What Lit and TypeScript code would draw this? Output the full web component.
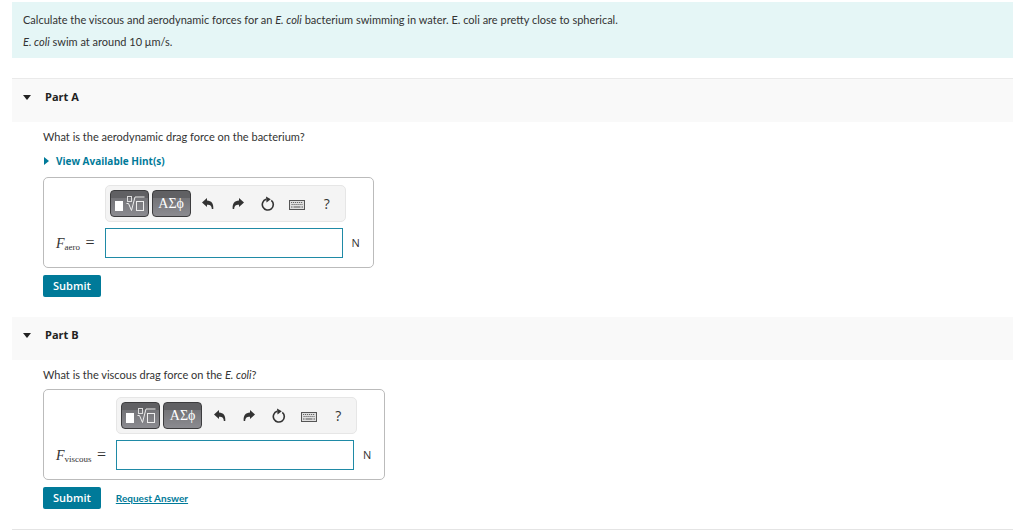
import { LitElement, html, css, svg } from "lit";
import { customElement, property } from "lit/decorators.js";

const icons = {
  template: svg`<svg width="33" height="21" viewBox="0 0 33 21" fill="none" stroke="#eee">
    <rect x="2" y="8" width="8" height="10" fill="#fff" stroke="none"/>
    <rect x="14.500" y="3.500" width="4" height="5" stroke="#ddd"/>
    <path d="M13.500 10.500h2l3 7 3.500-13.500h9.500"/>
    <rect x="23.500" y="8.500" width="7" height="9"/>
  </svg>`,
  undo: svg`<svg width="12" height="12" viewBox="0 0 12 12" fill="#333">
    <path d="M0 4.500 5 0v2.500c4.500 .2 6.800 3 6.300 8.500h-1.500c0-2.800-1.300-4.300-4.800-4.300V9z"/>
  </svg>`,
  redo: svg`<svg width="12" height="12" viewBox="0 0 12 12" fill="#333">
    <path d="M12 4.500 7 0v2.500C2.500 2.700.200 5.500.700 11h1.500c0-2.800 1.300-4.300 4.800-4.300V9z"/>
  </svg>`,
  reset: svg`<svg width="14" height="16" viewBox="0 0 14 16" fill="none">
    <path d="M10.300 4.300A5.500 5.500 0 1 1 5.200 3.300" stroke="#333" stroke-width="1.600"/>
    <path d="M5 .5 9.800 3.300 5.500 6.500z" fill="#333"/>
  </svg>`,
  keyboard: svg`<svg width="16" height="12" viewBox="0 0 16 12" fill="none">
    <rect x="0.500" y="2.500" width="15" height="9" fill="#e0e0e0" stroke="#555"/>
    <path d="M2 4.500h12M2.500 6.500h11" stroke="#666" stroke-dasharray="1.200 .8"/>
    <path d="M2 9h1.500M4.500 9h7M12.500 9h1.500" stroke="#555"/>
  </svg>`,
};

@customElement("answer-box")
class AnswerBox extends LitElement {
  @property() subscript = "";
  @property() unit = "";

  static styles = css`
    :host {
      display: block;
      width: fit-content;
      max-width: 100%;
      box-sizing: border-box;
      border: 1px solid #bbb;
      border-radius: 5px;
      padding: 7px 13px 9px 12px;
    }
    .grid {
      display: grid;
      grid-template-columns: auto auto;
      column-gap: 10px;
      row-gap: 6px;
      align-items: center;
    }
    .toolbar {
      grid-column: 2;
      width: 241px;
      height: 37px;
      box-sizing: border-box;
      display: flex;
      align-items: center;
      border: 1px solid #e6e6e6;
      border-radius: 5px;
      background: #f4f4f4;
      padding: 0 3px 0 4px;
    }
    button {
      display: flex;
      align-items: center;
      justify-content: center;
      height: 27px;
      padding: 0;
      border: 0;
      background: none;
      color: #333;
      cursor: pointer;
    }
    .dark {
      width: 39px;
      margin-right: 3px;
      border: 1px solid #3c3c3e;
      border-radius: 4px;
      background: linear-gradient(#606063 0 7px, #747478 7px, #8b8b90);
      color: #fff;
      font: 14px/20px "Liberation Serif", "DejaVu Serif", serif;
    }
    .tool {
      flex: 1;
      font: 14px/20px "Open Sans", sans-serif;
    }
    .name {
      font: 14px/20px "Liberation Serif", serif;
      color: #333;
      white-space: nowrap;
    }
    .name sub {
      font-size: 9px;
      line-height: 10px;
      margin-right: 2px;
      vertical-align: -2px;
    }
    .name .eq {
      font-size: 16px;
    }
    .row {
      display: flex;
      align-items: center;
      gap: 9px;
      font: 11px/20px "Open Sans", sans-serif;
      color: #333;
    }
    input {
      width: 238px;
      height: 30px;
      box-sizing: border-box;
      border: 1px solid #1f8aa6;
      border-radius: 0;
      padding: 0 6px;
      background: #fff;
    }
  `;

  render() {
    const tool = (label: string, icon: unknown) =>
      html`<button class="tool" aria-label=${label}>${icon}</button>`;
    return html`<div class="grid">
      <div class="toolbar">
        <button class="dark" aria-label="Templates">${icons.template}</button>
        <button class="dark">ΑΣϕ</button>
        ${tool("Undo", icons.undo)} ${tool("Redo", icons.redo)}
        ${tool("Reset", icons.reset)} ${tool("Keyboard", icons.keyboard)}
        ${tool("Help", "?")}
      </div>
      <label class="name" for="answer"><i>F</i><sub>${this.subscript}</sub> <span class="eq">=</span></label>
      <div class="row"><input id="answer" type="text" /><span>${this.unit}</span></div>
    </div>`;
  }
}

@customElement("app-root")
class AppRoot extends LitElement {
  static styles = css`
    :host {
      display: block;
      padding: 2px 11px 0 12px;
      font: 11px/20px Lato, "Open Sans", sans-serif;
      color: #333;
      background: #fff;
    }
    .intro {
      background: #e5f6f6;
      padding: 7px 11px 5px;
    }
    p {
      margin: 0;
    }
    .intro p {
      line-height: 22px;
    }
    .part {
      margin-top: 20px;
    }
    .head {
      display: flex;
      align-items: center;
      gap: 14px;
      background: #f9f9f9;
      padding: 8px 11px 15px;
    }
    .first .head {
      border-top: 1px solid #eaeaea;
    }
    h2 {
      margin: 0;
      font: 700 11px/20px "Open Sans", sans-serif;
      color: #222;
    }
    .body {
      padding: 5px 0 0 31px;
    }
    .question {
      margin-bottom: 4px;
    }
    .hints {
      display: flex;
      align-items: center;
      gap: 7px;
      margin-bottom: 6px;
      width: fit-content;
      font: 700 10px/20px "Open Sans", sans-serif;
      color: #007a99;
      text-decoration: none;
    }
    .actions {
      display: flex;
      align-items: center;
      gap: 15px;
      margin-top: 7px;
    }
    .submit {
      height: 22px;
      border: 0;
      border-radius: 2px;
      padding: 0 10px;
      background: #007a99;
      color: #fff;
      font: 600 11px/20px "Open Sans", sans-serif;
      cursor: pointer;
    }
    .request {
      font-size: 10px;
      font-weight: 700;
      color: #007a99;
    }
    .end {
      margin: 20px 0 0;
      border: 0;
      border-top: 1px solid #e4e4e4;
    }
  `;

  private head(title: string) {
    return html`<div class="head">
      <svg width="8" height="5" viewBox="0 0 8 5"><path d="M0 0h8L4 5z" fill="#222" /></svg>
      <h2>${title}</h2>
    </div>`;
  }

  render() {
    return html`
      <section class="intro">
        <p>Calculate the viscous and aerodynamic forces for an <i>E. coli</i> bacterium swimming in water. E. coli are pretty close to spherical.</p>
        <p><i>E. coli</i> swim at around 10 μm/s.</p>
      </section>
      <section class="part first">
        ${this.head("Part A")}
        <div class="body">
          <p class="question">What is the aerodynamic drag force on the bacterium?</p>
          <a class="hints" href="#hints">
            <svg width="6" height="8" viewBox="0 0 6 8"><path d="M1 0v8l5-4z" fill="#007a99" /></svg>
            View Available Hint(s)
          </a>
          <answer-box subscript="aero" unit="N"></answer-box>
          <div class="actions"><button class="submit">Submit</button></div>
        </div>
      </section>
      <section class="part">
        ${this.head("Part B")}
        <div class="body">
          <p class="question">What is the viscous drag force on the <i>E. coli</i>?</p>
          <answer-box subscript="viscous" unit="N"></answer-box>
          <div class="actions">
            <button class="submit">Submit</button>
            <a class="request" href="#answer">Request Answer</a>
          </div>
        </div>
      </section>
      <hr class="end" />
    `;
  }
}
